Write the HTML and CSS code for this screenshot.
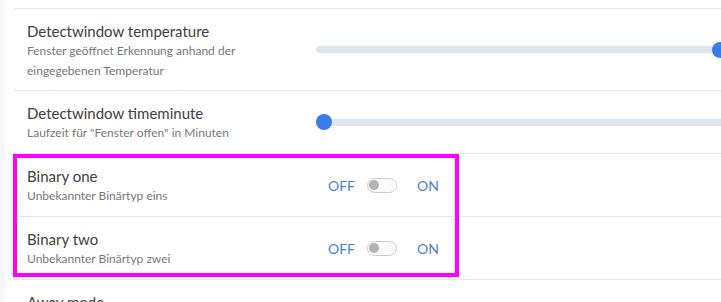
FILE: index.html
```html
<!DOCTYPE html>
<html lang="de">
<head>
    <meta charset="UTF-8">
    <meta name="viewport" content="width=device-width, initial-scale=1.0">
    <title>Settings</title>
    <link rel="stylesheet" href="styles.css">
</head>
<body>
    <div class="page">
        <div class="card">
            <div class="setting">
                <div class="label">
                    <h3>Detectwindow temperature</h3>
                    <p>Fenster geöffnet Erkennung anhand der<br>eingegebenen Temperatur</p>
                </div>
                <div class="slider">
                    <div class="track track-max"><span class="thumb"></span></div>
                </div>
            </div>

            <div class="setting">
                <div class="label">
                    <h3>Detectwindow timeminute</h3>
                    <p>Laufzeit für "Fenster offen" in Minuten</p>
                </div>
                <div class="slider">
                    <div class="track"><span class="thumb"></span></div>
                </div>
            </div>

            <!-- highlighted group -->
            <div class="highlight-group">
                <div class="setting">
                    <div class="label">
                        <h3>Binary one</h3>
                        <p>Unbekannter Binärtyp eins</p>
                    </div>
                    <div class="toggle">
                        <span class="toggle-text">OFF</span>
                        <span class="switch"><span class="knob"></span></span>
                        <span class="toggle-text on">ON</span>
                    </div>
                </div>
                <div class="setting">
                    <div class="label">
                        <h3>Binary two</h3>
                        <p>Unbekannter Binärtyp zwei</p>
                    </div>
                    <div class="toggle">
                        <span class="toggle-text">OFF</span>
                        <span class="switch"><span class="knob"></span></span>
                        <span class="toggle-text on">ON</span>
                    </div>
                </div>
                <div class="highlight"></div>
            </div>

            <div class="setting">
                <div class="label">
                    <h3>Away mode</h3>
                    <p>Abwesenheitsmodus</p>
                </div>
            </div>
        </div>
    </div>
</body>
</html>
```

FILE: styles.css
```css
* {
    margin: 0;
    padding: 0;
    box-sizing: border-box;
}

body {
    font-family: 'Lato', 'Open Sans', sans-serif;
    background: #f4f6fa;
    color: #404040;
    overflow: hidden;
}

.page {
    padding-left: 5px;
}

.card {
    background: #fff;
    width: 760px;
    padding-top: 8px;
    min-height: 320px;
}

/* One settings row */
.setting {
    margin-left: 9px;
    border-top: 1px solid #e6e6e6;
    display: grid;
    grid-template-columns: 289px 412px;
    padding-left: 13px;
    min-height: 63px;
}

.label {
    padding: 12px 0 9px;
}

.label h3 {
    font-size: 15px;
    font-weight: 400;
    line-height: 20px;
    color: #404040;
}

.label p {
    font-size: 12px;
    line-height: 20px;
    color: #777;
}

/* Slider */
.slider {
    align-self: center;
}

.track {
    height: 7px;
    border-radius: 4px;
    background: #dfe5ec;
    display: flex;
    align-items: center;
    justify-content: flex-start;
}

.track-max {
    justify-content: flex-end;
}

.thumb {
    flex: none;
    width: 16px;
    height: 16px;
    border-radius: 50%;
    background: #3a7de8;
}

/* Toggle */
.toggle {
    align-self: center;
    display: flex;
    align-items: center;
}

.toggle-text {
    font-size: 14px;
    color: #4a80d6;
    margin-left: 12px;
}

.toggle-text.on {
    margin-left: 20px;
}

.switch {
    margin-left: 12px;
    width: 30px;
    height: 15px;
    border: 1px solid #cdcdcd;
    border-radius: 8px;
    background: #fafafa;
    display: flex;
    align-items: center;
    padding-left: 1px;
}

.knob {
    width: 10px;
    height: 10px;
    border-radius: 50%;
    background: #b3b3b3;
}

/* Highlight box drawn over rows */
.highlight-group {
    position: relative;
}

.highlight {
    position: absolute;
    left: 8px;
    top: 1px;
    width: 446px;
    height: 123px;
    border: 4px solid #f0f;
    pointer-events: none;
}
```
